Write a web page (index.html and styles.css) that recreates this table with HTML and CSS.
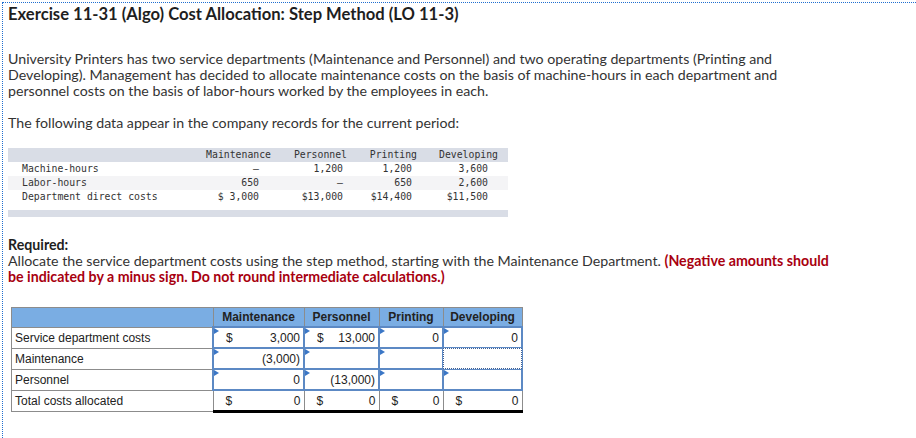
FILE: index.html
```html
<!DOCTYPE html>
<html>
<head>
<meta charset="utf-8">
<link rel="stylesheet" href="styles.css">
</head>
<body>
<div class="page">
  <h1 class="title">Exercise 11-31 (Algo) Cost Allocation: Step Method (LO 11-3)</h1>
  <p class="para">University Printers has two service departments (Maintenance and Personnel) and two operating departments (Printing and Developing). Management has decided to allocate maintenance costs on the basis of machine-hours in each department and personnel costs on the basis of labor-hours worked by the employees in each.</p>
  <p class="para">The following data appear in the company records for the current period:</p>

  <table class="data">
    <colgroup>
      <col class="k0"><col class="k1"><col class="k2"><col class="k3"><col class="k4">
    </colgroup>
    <tr class="dhead">
      <td class="lab"></td>
      <td class="c1">Maintenance</td>
      <td class="c2">Personnel</td>
      <td class="c3">Printing</td>
      <td class="c4">Developing</td>
    </tr>
    <tr>
      <td class="lab">Machine-hours</td>
      <td class="c1">—</td>
      <td class="c2">1,200</td>
      <td class="c3">1,200</td>
      <td class="c4">3,600</td>
    </tr>
    <tr class="alt">
      <td class="lab">Labor-hours</td>
      <td class="c1">650</td>
      <td class="c2">—</td>
      <td class="c3">650</td>
      <td class="c4">2,600</td>
    </tr>
    <tr>
      <td class="lab">Department direct costs</td>
      <td class="c1">$ 3,000</td>
      <td class="c2">$13,000</td>
      <td class="c3">$14,400</td>
      <td class="c4">$11,500</td>
    </tr>
    <tr class="spacer"><td colspan="5"></td></tr>
    <tr class="dfoot"><td colspan="5"></td></tr>
  </table>

  <div class="req">
    <div class="req-h">Required:</div>
    <div>Allocate the service department costs using the step method, starting with the Maintenance Department. <span class="red">(Negative amounts should be indicated by a minus sign. Do not round intermediate calculations.)</span></div>
  </div>

  <table class="alloc">
    <tr class="ahead">
      <th class="alab"></th>
      <th class="w1">Maintenance</th>
      <th class="w2">Personnel</th>
      <th class="w3">Printing</th>
      <th class="w4">Developing</th>
    </tr>
    <tr>
      <td class="alab">Service department costs</td>
      <td class="inp"><span class="flag"></span><span class="cur">$</span><span class="num">3,000</span></td>
      <td class="inp"><span class="flag"></span><span class="cur">$</span><span class="num">13,000</span></td>
      <td class="inp"><span class="flag"></span><span class="num">0</span></td>
      <td class="inp"><span class="flag"></span><span class="num">0</span></td>
    </tr>
    <tr>
      <td class="alab">Maintenance</td>
      <td class="inp"><span class="flag"></span><span class="num">(3,000)</span></td>
      <td class="inp"><span class="flag"></span></td>
      <td class="inp"><span class="flag"></span></td>
      <td class="inp focus"><span class="dot"></span></td>
    </tr>
    <tr>
      <td class="alab">Personnel</td>
      <td class="inp"><span class="flag"></span><span class="num">0</span></td>
      <td class="inp"><span class="flag"></span><span class="num">(13,000)</span></td>
      <td class="inp"><span class="flag"></span></td>
      <td class="inp"><span class="flag"></span></td>
    </tr>
    <tr class="tot">
      <td class="alab">Total costs allocated</td>
      <td class="tv"><span class="cur">$</span><span class="num">0</span></td>
      <td class="tv"><span class="cur">$</span><span class="num">0</span></td>
      <td class="tv"><span class="cur">$</span><span class="num">0</span></td>
      <td class="tv"><span class="cur">$</span><span class="num">0</span></td>
    </tr>
  </table>
</div>
</body>
</html>
```

FILE: styles.css
```css
html, body {
  margin: 0;
  padding: 0;
  background: #fff;
}
.page {
  margin: 2px 0 0 2px;
  border-top: 1px dotted #1f6fd0;
  border-left: 1px dotted #1f6fd0;
  padding: 0 0 0 5px;
  height: 436px;
  overflow: hidden;
  box-sizing: border-box;
  font-family: Lato, "Liberation Sans", sans-serif;
  color: #333;
}
.title {
  margin: 0;
  padding-top: 1px;
  font-size: 16.6px;
  line-height: 20px;
  font-weight: 700;
  color: #1e1e1e;
}
.para {
  margin: 27px 0 0 0;
  font-size: 14.2px;
  line-height: 16px;
  max-width: 800px;
}
.para + .para {
  margin-top: 16px;
}
.data {
  margin: 17px 0 0 0;
  border-collapse: collapse;
  table-layout: fixed;
  width: 500px;
  font-family: "DejaVu Sans Mono", "Liberation Mono", monospace;
  font-size: 9.8px;
  color: #333;
}
.k0 { width: 194px; }
.k1 { width: 72px; }
.k2 { width: 76px; }
.k3 { width: 70px; }
.k4 { width: 88px; }
.data td {
  height: 14px;
  padding: 0;
  text-align: right;
  white-space: nowrap;
  line-height: 14px;
}
.data td.lab {
  text-align: left;
  padding-left: 14px;
}
.dhead td { background: #d9dde6; }
.alt td { background: #f4f4f6; }
.data .c1 { padding-right: 15px; }
.data .c2 { padding-right: 7px; }
.data .c3 { padding-right: 8px; }
.data .c4 { padding-right: 20px; }
.dhead .c1 { padding-right: 3px; }
.dhead .c2 { padding-right: 3px; }
.dhead .c3 { padding-right: 3px; }
.dhead .c4 { padding-right: 10px; }
.data .spacer td { height: 6px; line-height: 6px; }
.data .dfoot td { height: 7px; line-height: 7px; background: #d9dde6; }

.req {
  margin-top: 20px;
  font-size: 14.2px;
  line-height: 16px;
  max-width: 834px;
}
.req-h {
  font-weight: 700;
  color: #1e1e1e;
}
.red {
  color: #a8000f;
  font-weight: 700;
}

.alloc {
  margin: 22px 0 0 3px;
  border-collapse: collapse;
  font-family: "Liberation Sans", Arial, sans-serif;
  font-size: 12px;
  color: #222;
}
.alloc th, .alloc td {
  border: 1px solid #8c8c8c;
  padding: 0;
  height: 19px;
  white-space: nowrap;
}
.ahead th {
  background: #7aade3;
  font-weight: 700;
  text-align: center;
  height: 18px;
}
.alloc .alab {
  width: 197px;
  text-align: left;
  padding-left: 3px;
}
.w1 { width: 90px; }
.w2 { width: 74px; }
.w3 { width: 63px; }
.w4 { width: 78px; }
.alloc td.inp {
  position: relative;
  border: 2px solid #5c89c4;
  text-align: right;
  padding: 0 3px 0 12px;
}
.alloc td.inp.focus {
  padding: 0;
}
.dot {
  position: absolute;
  left: -1px;
  right: -1px;
  top: -1px;
  bottom: -1px;
  background: #fff;
  border: 1px dotted #3e5f93;
}
.flag {
  position: absolute;
  left: 0;
  top: 0;
  width: 0;
  height: 0;
  border-top: 3px solid transparent;
  border-bottom: 3px solid transparent;
  border-left: 5px solid #3b77c6;
}
.cur {
  float: left;
}
.alloc td.tv {
  text-align: right;
  padding: 0 3px 0 12px;
  border-bottom: 3px solid #000;
}
.tot .alab {
  border-bottom: 1px solid #8c8c8c;
}
```
